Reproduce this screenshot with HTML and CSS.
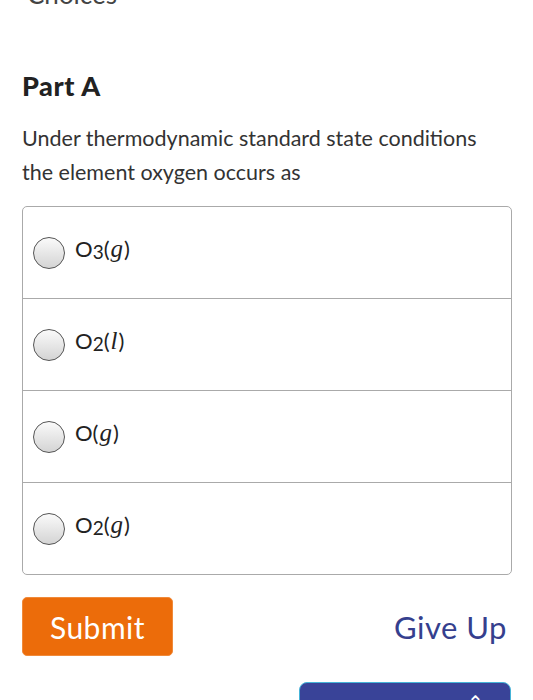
FILE: index.html
```html
<html lang="en">
<head>
<meta charset="utf-8">
<link rel="stylesheet" href="styles.css">
</head>
<body>
    <div class="prev-header">
        <span class="prev-title">Choices</span>
    </div>

    <div class="part">
        <h2 class="part-title">Part A</h2>
        <p class="question">Under thermodynamic standard state conditions the element oxygen occurs as</p>

        <div class="choices">
            <label class="choice">
                <span class="radio"></span>
                <span class="formula">O<span class="num">3</span>(<i>g</i>)</span>
            </label>
            <label class="choice">
                <span class="radio"></span>
                <span class="formula">O<span class="num">2</span>(<i>l</i>)</span>
            </label>
            <label class="choice">
                <span class="radio"></span>
                <span class="formula">O(<i>g</i>)</span>
            </label>
            <label class="choice">
                <span class="radio"></span>
                <span class="formula">O<span class="num">2</span>(<i>g</i>)</span>
            </label>
        </div>

        <div class="actions">
            <button class="submit">Submit</button>
            <a class="give-up">Give Up</a>
        </div>

        <div class="footer-row">
            <button class="next">&#8963;</button>
        </div>
    </div>
</body>
</html>
```

FILE: styles.css
```css
body {
    margin: 0;
    font-family: "Lato", "Open Sans", sans-serif;
    color: #333;
    background: #fff;
    overflow: hidden;
}

.prev-header {
    height: 1px;
    border-bottom: 1px solid #e2e2e2;
    padding-left: 27px;
}

.prev-title {
    display: block;
    margin-top: -20px;
    font-size: 26px;
    line-height: 28px;
    color: #444;
}

.part {
    padding: 0 21px 0 22px;
}

.part-title {
    margin: 89px 0 0;
    font-size: 27px;
    line-height: 30px;
    font-weight: 900;
    letter-spacing: 0.6px;
    color: #222;
}

.question {
    margin: 20px 0 0;
    font-size: 21.5px;
    line-height: 34px;
    color: #333;
}

.choices {
    margin-top: 17px;
    border: 1px solid #aaa;
    border-radius: 5px;
}

.choice {
    display: flex;
    align-items: center;
    height: 91px;
    padding-left: 10px;
    border-top: 1px solid #aaa;
}

.choice:first-child {
    border-top: none;
}

.radio {
    width: 30px;
    height: 30px;
    border: 1.5px solid #555;
    border-radius: 50%;
    background: linear-gradient(#fafafa, #d4d4d4);
}

.formula {
    margin-left: 10px;
    margin-top: -8px;
    font-size: 22px;
    color: #222;
}

.num {
    font-size: 19px;
    position: relative;
    top: 2px;
}

.formula i {
    font-family: "Liberation Serif", serif;
    font-size: 25px;
    padding: 0 1px;
}

.actions {
    display: flex;
    justify-content: space-between;
    align-items: center;
    margin-top: 22px;
}

.submit {
    width: 151px;
    height: 59px;
    border: 1px solid #f08a3a;
    border-radius: 5px;
    background: #ec6c0a;
    color: #fff;
    font-family: "Lato", sans-serif;
    font-size: 30px;
    letter-spacing: 0.5px;
}

.give-up {
    margin-right: 5px;
    font-size: 31px;
    letter-spacing: 0.5px;
    color: #353f8e;
}

.footer-row {
    display: flex;
    justify-content: flex-end;
    margin-top: 26px;
}

.next {
    width: 212px;
    height: 40px;
    margin-right: 1px;
    border: 1px solid #45b4d8;
    border-radius: 8px;
    background: #394398;
    color: #fff;
    font-size: 20px;
    text-align: right;
    padding: 0 26px 0 0;
    line-height: 40px;
}
```
